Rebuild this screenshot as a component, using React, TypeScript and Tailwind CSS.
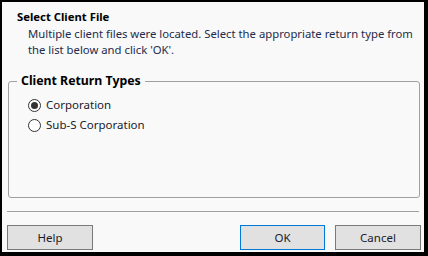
import React from 'react';

const font = { fontFamily: '"Noto Sans", "Open Sans", Arial, sans-serif' };

interface RadioProps {
  label: string;
  checked?: boolean;
}

const Radio: React.FC<RadioProps> = ({ label, checked }) => {
  return (
    <div className="flex items-center h-[20px]">
      <span className="w-[13px] h-[13px] rounded-full border border-[#333333] bg-white flex items-center justify-center">
        {checked && <span className="w-[7px] h-[7px] rounded-full bg-[#333333]" />}
      </span>
      <span className="ml-[5px] text-[11.5px] leading-[16px] text-[#1a1a2a]">{label}</span>
    </div>
  );
};

interface ButtonProps {
  label: string;
  primary?: boolean;
  width: string;
}

const DialogButton: React.FC<ButtonProps> = ({ label, primary, width }) => {
  return (
    <button
      className={
        'h-[25px] bg-[#e1e1e1] border text-[11.5px] text-[#1a1a2a] ' +
        width +
        (primary ? ' border-[#0078d7]' : ' border-[#7a7a7a]')
      }
    >
      {label}
    </button>
  );
};

export default function App() {
  return (
    <div
      className="w-[428px] h-[256px] border-l-2 border-t-2 border-r-4 border-b-4 border-black bg-[#f9f9f9] flex flex-col"
      style={font}
    >
      <div className="pl-[15px] pt-[7px]">
        <div className="text-[11.3px] leading-[16px] font-bold text-black">Select Client File</div>
        <div className="ml-[11px] mt-[1px] text-[11.3px] leading-[16px] text-[#1e2c4c]">
          Multiple client files were located. Select the appropriate return type from
          <br />
          the list below and click 'OK'.
        </div>
      </div>

      <fieldset className="ml-[6px] mr-[4px] mt-[14px] h-[126px] border border-[#a0a0a0] rounded-[3px]">
        <legend className="ml-[8px] px-[4px] text-[12.3px] leading-[18px] font-bold text-black">
          Client Return Types
        </legend>
        <div className="mt-[5px] ml-[19px]">
          <Radio label="Corporation" checked />
          <Radio label="Sub-S Corporation" />
        </div>
      </fieldset>

      <div className="mx-[5px] mt-[13px] h-px bg-[#a0a0a0]" />

      <div className="flex mt-[13px] pl-[5px]">
        <DialogButton label="Help" width="w-[86px]" />
        <div className="flex-1" />
        <DialogButton label="OK" primary width="w-[85px]" />
        <div className="w-[10px]" />
        <DialogButton label="Cancel" width="w-[86px]" />
        <div className="w-[3px]" />
      </div>
    </div>
  );
}
